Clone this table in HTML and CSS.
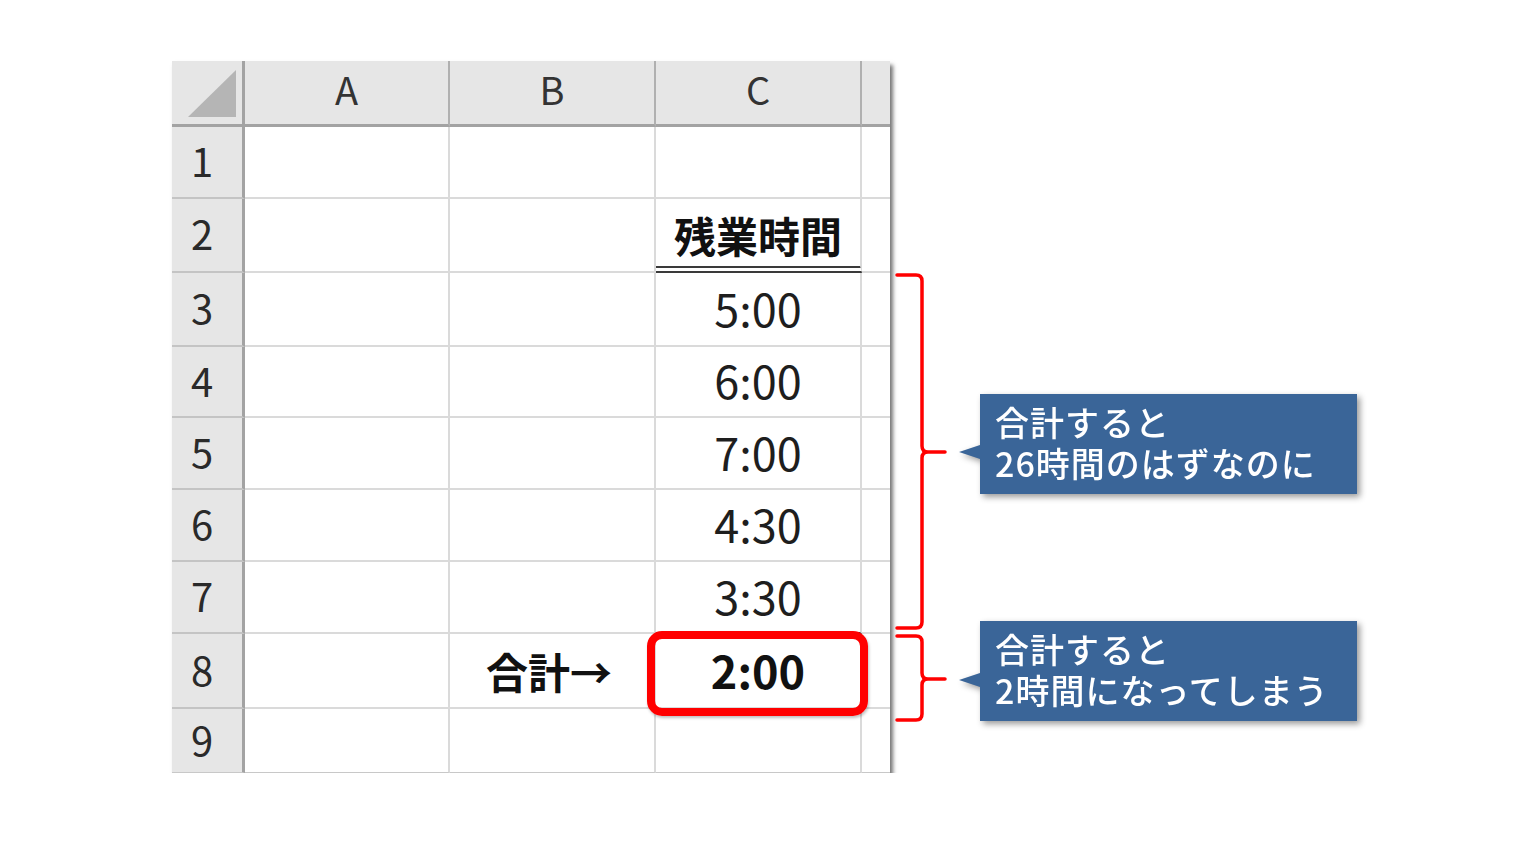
FILE: index.html
```html
<!DOCTYPE html>
<html lang="ja">
<head>
<meta charset="utf-8">
<title>残業時間の合計</title>
<link rel="stylesheet" href="styles.css">
</head>
<body>
<div class="page">
  <div class="sheet">
    <div class="corner"><svg class="corner-tri" width="48" height="47" viewBox="0 0 48 47"><polygon points="0,47 48,47 48,0" fill="#b5b5b5"/></svg></div>
    <div class="colhead">A</div>
    <div class="colhead">B</div>
    <div class="colhead">C</div>
    <div class="colhead last"></div>

    <div class="rowhead">1</div><div class="cell"></div><div class="cell"></div><div class="cell"></div><div class="cell last"></div>
    <div class="rowhead">2</div><div class="cell"></div><div class="cell"></div><div class="cell title">残業時間</div><div class="cell last"></div>
    <div class="rowhead">3</div><div class="cell"></div><div class="cell"></div><div class="cell val">5:00</div><div class="cell last"></div>
    <div class="rowhead">4</div><div class="cell"></div><div class="cell"></div><div class="cell val">6:00</div><div class="cell last"></div>
    <div class="rowhead">5</div><div class="cell"></div><div class="cell"></div><div class="cell val">7:00</div><div class="cell last"></div>
    <div class="rowhead">6</div><div class="cell"></div><div class="cell"></div><div class="cell val">4:30</div><div class="cell last"></div>
    <div class="rowhead">7</div><div class="cell"></div><div class="cell"></div><div class="cell val above-total">3:30</div><div class="cell last"></div>
    <div class="rowhead">8</div><div class="cell"></div><div class="cell label">合計→</div><div class="cell val total">2:00</div><div class="cell last"></div>
    <div class="rowhead end">9</div><div class="cell end"></div><div class="cell end"></div><div class="cell end"></div><div class="cell last end"></div>
  </div>

  <div class="notes">
    <div class="note note-sum">
      <svg class="brace" width="60" height="362" viewBox="0 0 60 362"><path d="M7,5 H26 Q32,5 32,11 V176 Q32,182 38,182 H55 M38,182 Q32,182 32,188 V352 Q32,358 26,358 H7" fill="none" stroke="#ff0000" stroke-width="3.5" stroke-linecap="round"/></svg>
      <div class="callout callout-sum">
        <div class="callout-line">合計すると</div>
        <div class="callout-line">26時間のはずなのに</div>
      </div>
    </div>
    <div class="note note-total">
      <svg class="brace brace-small" width="60" height="92" viewBox="0 0 60 92"><path d="M7,4 H26 Q32,4 32,10 V41 Q32,47 38,47 H55 M38,47 Q32,47 32,53 V82 Q32,88 26,88 H7" fill="none" stroke="#ff0000" stroke-width="3.5" stroke-linecap="round"/></svg>
      <div class="callout callout-total">
        <div class="callout-line">合計すると</div>
        <div class="callout-line">2時間になってしまう</div>
      </div>
    </div>
  </div>
</div>
</body>
</html>
```

FILE: styles.css
```css
* { box-sizing: border-box; }

html, body {
  margin: 0;
  padding: 0;
  background: #ffffff;
}

body {
  font-family: "Noto Sans CJK JP", "Noto Sans", sans-serif;
  color: #222;
}

.page {
  display: flex;
  align-items: flex-start;
  padding: 61px 0 0 172px;
}

/* ---------- spreadsheet ---------- */
.sheet {
  display: grid;
  grid-template-columns: 73px 205px 206px 206px 28px;
  grid-template-rows: 66px 72px 74px 74px 71px 72px 72px 72px 75px 64px;
  width: 718px;
  box-shadow: 3px 4px 4px rgba(0, 0, 0, 0.55);
  background: #fff;
}

.corner {
  background: #e6e6e6;
  border-right: 3px solid #a3a3a3;
  border-bottom: 3px solid #a3a3a3;
  display: flex;
  align-items: flex-end;
  justify-content: flex-end;
  padding: 0 6px 7px 0;
}

.corner-tri { display: block; }

.colhead {
  background: #e6e6e6;
  border-right: 2px solid #b0b0b0;
  border-bottom: 3px solid #a3a3a3;
  display: flex;
  align-items: center;
  justify-content: center;
  font-size: 38px;
  color: #333;
  padding-bottom: 8px;
}

.colhead.last { border-right: none; }

.rowhead {
  background: #e6e6e6;
  border-right: 3px solid #a3a3a3;
  border-bottom: 2px solid #c4c4c4;
  display: flex;
  align-items: center;
  justify-content: center;
  font-size: 40px;
  color: #2a2a2a;
  padding: 0 10px 4px 0;
}

.cell {
  border-right: 2px solid #dadada;
  border-bottom: 2px solid #dadada;
  display: flex;
  align-items: center;
  justify-content: center;
  color: #1e1e1e;
}

.cell.last { border-right: none; }
.end { border-bottom: 1px solid #c8c8c8; }

.title {
  font-size: 42px;
  font-weight: 700;
  color: #111;
  border-bottom: 7px double #3a3a3a;
  padding-top: 4px;
}

.val {
  font-size: 45px;
  padding-bottom: 4px;
}

.above-total { border-bottom: 2px solid #333; }

.label {
  justify-content: flex-end;
  padding: 0 42px 0 0;
  font-size: 42px;
  font-weight: 700;
  color: #111;
}

.total {
  position: relative;
  font-weight: 700;
  color: #111;
  padding: 0 0 2px 0;
}

.total::after {
  content: "";
  position: absolute;
  top: -3px;
  left: -9px;
  right: -8px;
  bottom: -9px;
  border: 8px solid #ff0000;
  border-radius: 15px;
  box-shadow: 1px 2px 3px rgba(0, 0, 0, 0.25);
}

/* ---------- annotations ---------- */
.notes {
  display: flex;
  flex-direction: column;
  margin-top: 209px;
}

.note {
  display: flex;
  align-items: flex-start;
}

.note-total { margin-top: -11px; }

.brace { display: block; flex: none; }
.brace-small { margin-top: 11px; }

.callout {
  position: relative;
  display: flex;
  flex-direction: column;
  width: 377px;
  height: 100px;
  margin-left: 30px;
  padding: 7px 0 0 15px;
  background: #3a6598;
  color: #ffffff;
  font-size: 34px;
  font-weight: 500;
  letter-spacing: 1px;
  filter: drop-shadow(3px 3px 3px rgba(0, 0, 0, 0.4));
}

.callout-line {
  height: 41px;
  line-height: 41px;
  white-space: nowrap;
}

.callout-sum { margin-top: 124px; }

.callout::before {
  content: "";
  position: absolute;
  left: -21px;
  top: 51px;
  border-right: 21px solid #3a6598;
  border-top: 7px solid transparent;
  border-bottom: 7px solid transparent;
}

.callout-total::before { top: 52px; }
```
